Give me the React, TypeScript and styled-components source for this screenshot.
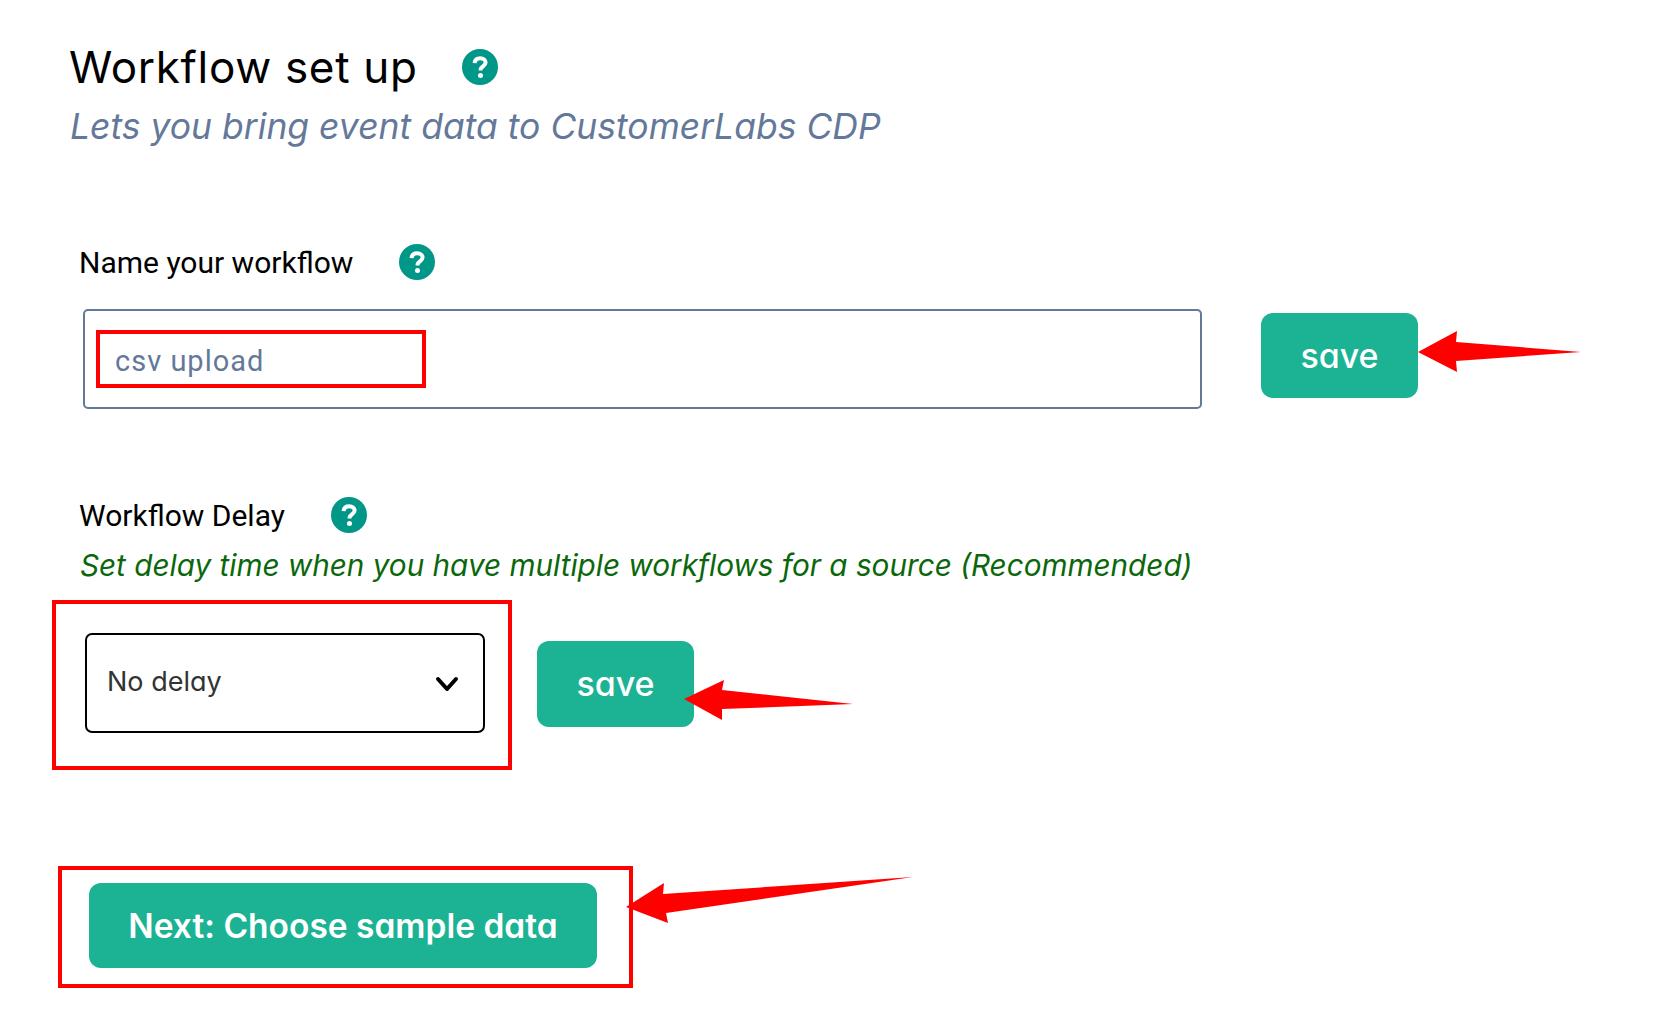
import React from "react";
import styled, { createGlobalStyle } from "styled-components";

const Global = createGlobalStyle`
  html, body { margin: 0; padding: 0; background: #fff; }
  body { font-family: "Inter", "Liberation Sans", sans-serif; }
`;

const Page = styled.main`
  width: 1672px;
  height: 1022px;
  box-sizing: border-box;
  padding: 35px 0 0 70px;
  overflow: hidden;
  display: flex;
  flex-direction: column;
`;

const TitleRow = styled.div`
  display: flex;
  align-items: center;
  gap: 46px;
  height: 64px;
`;

const Title = styled.h1`
  margin: 0 1px 0 -1px;
  font: 400 44px/64px "Inter", sans-serif;
  font-feature-settings: "cv11";
  letter-spacing: 0.68px;
  color: #000;
  width: 346px;
  white-space: nowrap;
`;

const Subtitle = styled.p`
  margin: 8px 0 0;
  font: italic 400 35.5px/40px "Inter", sans-serif;
  font-feature-settings: "cv11";
  color: #64789a;
  white-space: nowrap;
`;

const Section = styled.section<{ $top: number }>`
  margin-top: ${(p) => p.$top}px;
  margin-left: 10px;
  display: flex;
  flex-direction: column;
`;

const LabelRow = styled.div`
  display: flex;
  align-items: center;
  gap: 47px;
  height: 36px;
`;

const Label = styled.label<{ $width: number }>`
  width: ${(p) => p.$width}px;
  margin-left: -1px;
  margin-right: 1px;
  padding-top: 2px;
  font: 400 30px/36px "Roboto", sans-serif;
  color: #000;
  white-space: nowrap;
`;

const HelpSvg = styled.svg`
  width: 36px;
  height: 36px;
  flex: none;
`;

const InputRow = styled.div`
  display: flex;
  align-items: flex-start;
  margin: 29px 0 0 3px;
  position: relative;
`;

const NameField = styled.div`
  position: relative;
  box-sizing: border-box;
  width: 1119px;
  height: 100px;
  border: 2px solid #64789a;
  border-radius: 5px;
  padding: 32px 0 0 30px;
  font: 400 29px/36px "Roboto", sans-serif;
  letter-spacing: 1px;
  color: #64789a;
`;

const NameHighlight = styled.span`
  position: absolute;
  left: 11px;
  top: 19px;
  width: 330px;
  height: 58px;
  box-sizing: border-box;
  border: 4px solid #ff0000;
`;

const SaveButton = styled.button`
  flex: none;
  width: 157px;
  height: 85px;
  border: 0;
  border-radius: 12px;
  background: #1bb394;
  color: #fff;
  font: 500 34px/1 "Inter", sans-serif;
  font-feature-settings: "cv11";
`;

const NameSave = styled(SaveButton)`
  margin: 4px 0 0 59px;
`;

const Arrow = styled.svg<{ $left: number; $top: number }>`
  position: absolute;
  left: ${(p) => p.$left}px;
  top: ${(p) => p.$top}px;
  overflow: visible;
`;

const Hint = styled.p`
  margin: 12px 0 0;
  font: italic 400 29.7px/40px "Inter", sans-serif;
  font-feature-settings: "cv11";
  color: #0b670b;
  white-space: nowrap;
`;

const DelayRow = styled.div`
  position: relative;
  display: flex;
  align-items: flex-start;
  margin: 15px 0 0 -28px;
`;

const RedFrame = styled.div`
  box-sizing: border-box;
  border: 4px solid #ff0000;
`;

const SelectFrame = styled(RedFrame)`
  width: 460px;
  height: 170px;
  padding: 29px 0 0 29px;
`;

const Select = styled.div`
  box-sizing: border-box;
  width: 400px;
  height: 100px;
  border: 2px solid #000;
  border-radius: 7px;
  padding: 0 24px 3px 20px;
  display: flex;
  align-items: center;
  justify-content: space-between;
  font: 400 27px/1 "Inter", sans-serif;
  font-feature-settings: "cv11";
  color: #333;
`;

const Chevron = styled.svg`
  width: 24px;
  height: 16px;
  margin-top: 4px;
`;

const DelaySave = styled(SaveButton)`
  height: 86px;
  margin: 41px 0 0 25px;
`;

const NextRow = styled.div`
  position: relative;
  margin: 96px 0 0 -22px;
  width: 575px;
`;

const NextFrame = styled(RedFrame)`
  width: 575px;
  height: 122px;
  padding: 13px 0 0 27px;
`;

const NextButton = styled.button`
  display: block;
  width: 508px;
  height: 85px;
  border: 0;
  border-radius: 12px;
  padding: 2px 0 0;
  background: #1bb394;
  color: #fff;
  font: 600 33.5px/1 "Inter", sans-serif;
  font-feature-settings: "cv11";
`;

const HelpIcon = () => (
  <HelpSvg viewBox="0 0 36 36" aria-label="help">
    <circle cx="18" cy="18" r="18" fill="#009688" />
    <path
      d="M12.6 14.2 C12.8 10.8 15.2 9.2 18.2 9.2 C21.4 9.2 23.6 11 23.6 13.6 C23.6 17 19 17.4 18.6 20.2 L18.6 21.6"
      fill="none"
      stroke="#fff"
      strokeWidth="4"
    />
    <circle cx="18.5" cy="26.4" r="2.5" fill="#fff" />
  </HelpSvg>
);

export default function App() {
  return (
    <Page>
      <Global />
      <TitleRow>
        <Title>Workflow set up</Title>
        <HelpIcon />
      </TitleRow>
      <Subtitle>Lets you bring event data to CustomerLabs CDP</Subtitle>

      <Section $top={97}>
        <LabelRow>
          <Label $width={272}>Name your workflow</Label>
          <HelpIcon />
        </LabelRow>
        <InputRow>
          <NameField>
            csv upload
            <NameHighlight />
          </NameField>
          <NameSave>save</NameSave>
          <Arrow $left={1335} $top={22} width="163" height="41" viewBox="0 0 163 41">
            <path d="M0 21 L39 0 L38 11 L163 21 L38 30 L39 41 Z" fill="#ff0000" />
          </Arrow>
        </InputRow>
      </Section>

      <Section $top={88}>
        <LabelRow>
          <Label $width={204}>Workflow Delay</Label>
          <HelpIcon />
        </LabelRow>
        <Hint>Set delay time when you have multiple workflows for a source (Recommended)</Hint>
        <DelayRow>
          <SelectFrame>
            <Select>
              No delay
              <Chevron viewBox="0 0 24 16" fill="none" stroke="#000" strokeWidth="4" strokeLinecap="round" strokeLinejoin="round">
                <path d="M3 3 L12 13 L21 3" />
              </Chevron>
            </Select>
          </SelectFrame>
          <DelaySave>save</DelaySave>
          <Arrow $left={632} $top={80} width="169" height="40" viewBox="0 0 169 40">
            <path d="M0 19 L40 0 L38 10 L169 24 L38 29 L38 40 Z" fill="#ff0000" />
          </Arrow>
        </DelayRow>
        <NextRow>
          <NextFrame>
            <NextButton>Next: Choose sample data</NextButton>
          </NextFrame>
          <Arrow $left={568} $top={11} width="287" height="46" viewBox="0 0 287 46">
            <path d="M0 30 L38 6 L37 17 L287 0 L40 36 L42 46 Z" fill="#ff0000" />
          </Arrow>
        </NextRow>
      </Section>
    </Page>
  );
}
